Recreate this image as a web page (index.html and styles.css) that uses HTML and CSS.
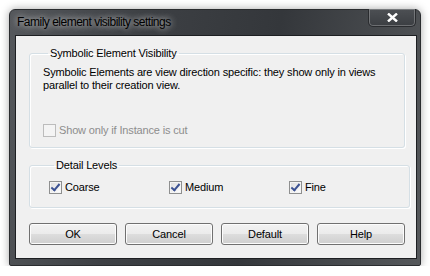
FILE: index.html
```html
<!DOCTYPE html>
<html lang="en">
<head>
    <meta charset="UTF-8">
    <meta name="viewport" content="width=device-width, initial-scale=1.0">
    <title>Family element visibility settings</title>
    <link rel="stylesheet" href="styles.css">
</head>
<body>
    <div class="window">
        <!-- title bar -->
        <div class="titlebar">
            <span class="title">Family element visibility settings</span>
            <button class="close" aria-label="Close">
                <svg width="11" height="9" viewBox="0 0 11 9">
                    <path d="M1 0.5 L10 8.5 M10 0.5 L1 8.5" stroke="#fff" stroke-width="2.4"/>
                </svg>
            </button>
        </div>

        <div class="client">
            <!-- symbolic elements -->
            <fieldset class="group group-symbolic">
                <legend>Symbolic Element Visibility</legend>
                <p class="note">Symbolic Elements are view direction specific: they show only in views parallel to their creation view.</p>
                <label class="check disabled">
                    <span class="box"></span>
                    Show only if Instance is cut
                </label>
            </fieldset>

            <!-- detail levels -->
            <fieldset class="group group-detail">
                <legend>Detail Levels</legend>
                <div class="levels">
                    <label class="check"><span class="box checked"></span>Coarse</label>
                    <label class="check"><span class="box checked"></span>Medium</label>
                    <label class="check"><span class="box checked"></span>Fine</label>
                </div>
            </fieldset>

            <div class="buttons">
                <button class="btn">OK</button>
                <button class="btn">Cancel</button>
                <button class="btn">Default</button>
                <button class="btn">Help</button>
            </div>
        </div>
    </div>
</body>
</html>
```

FILE: styles.css
```css
/* page */
body {
    margin: 0;
    background: #fff;
    font-family: 'Liberation Sans', Arial, sans-serif;
    font-size: 11px;
    letter-spacing: -0.15px;
    color: #000;
}

/* window frame */
.window {
    width: 412px;
    height: 257px;
    margin: 9px 0 0 9px;
    box-sizing: border-box;
    border: 1px solid #2a2c2f;
    border-radius: 6px 6px 2px 2px;
    background: linear-gradient(100deg, #55585c 0%, #3d4044 30%, #34373b 60%, #55585b 100%);
    box-shadow: 0 0 8px rgba(0, 0, 0, 0.35);
    display: flex;
    flex-direction: column;
}

/* title bar */
.titlebar {
    height: 25px;
    display: flex;
    align-items: flex-start;
    justify-content: space-between;
    padding-left: 7px;
}

.title {
    font-size: 12px;
    letter-spacing: -0.5px;
    line-height: 22px;
    margin-top: 1px;
    color: #000;
    text-shadow: 0 0 6px rgba(255, 255, 255, 0.7), 0 0 10px rgba(255, 255, 255, 0.4);
}

.close {
    width: 48px;
    height: 18px;
    margin: -1px 4px 0 0;
    padding: 0;
    border: 1px solid #2a2c2f;
    border-top: none;
    border-radius: 0 0 5px 5px;
    background: linear-gradient(#4d5054, #3b3e42);
    box-shadow: inset 0 0 0 1px rgba(255, 255, 255, 0.25);
    display: flex;
    align-items: center;
    justify-content: center;
}

/* client area */
.client {
    flex: 1;
    margin: 0 3px 6px 5px;
    background: #f0f0f0;
    border: 1px solid #1d1f22;
    padding: 11px 11px 0 13px;
}

/* group boxes */
.group {
    margin: 0;
    padding: 0 0 0 13px;
    border: 1px solid #d5dfe5;
    border-radius: 3px;
    box-shadow: inset 1px 1px 0 #fff, 1px 1px 0 #fff;
}

.group legend {
    margin-left: 5px;
    padding: 0 2px;
    line-height: 13px;
}

.group-symbolic {
    height: 101px;
    box-sizing: border-box;
}

.group-detail {
    margin-top: 11px;
    height: 49px;
    box-sizing: border-box;
    padding-left: 19px;
}

.note {
    margin: 6px 0 0;
    line-height: 13px;
    width: 345px;
}

/* checkboxes */
.check {
    display: flex;
    align-items: center;
    gap: 3px;
    line-height: 13px;
}

.group-symbolic .check {
    margin-top: 32px;
}

.check.disabled {
    color: #8d8d8d;
}

.box {
    width: 11px;
    height: 11px;
    border: 1px solid #8e8f8f;
    background: linear-gradient(135deg, #dcdcdc, #fff);
    box-shadow: inset 0 0 0 1px #f4f4f4;
    position: relative;
}

.check.disabled .box {
    border-color: #bcbcbc;
    background: #f4f4f4;
}

.box.checked::after {
    content: '';
    position: absolute;
    left: 3px;
    top: 0;
    width: 3px;
    height: 7px;
    border: solid #3c5293;
    border-width: 0 2px 2px 0;
    transform: rotate(40deg);
}

.levels {
    display: grid;
    grid-template-columns: 120px 120px 120px;
    margin-top: 9px;
}

/* buttons */
.buttons {
    display: flex;
    justify-content: space-between;
    margin-top: 15px;
}

.btn {
    width: 88px;
    height: 22px;
    padding: 0;
    font-family: inherit;
    font-size: 11px;
    letter-spacing: inherit;
    color: #000;
    border: 1px solid #707070;
    border-radius: 3px;
    background: linear-gradient(#f2f2f2 0%, #ebebeb 49%, #dddddd 50%, #cfcfcf 100%);
    box-shadow: inset 0 0 0 1px #fcfcfc;
}
```
